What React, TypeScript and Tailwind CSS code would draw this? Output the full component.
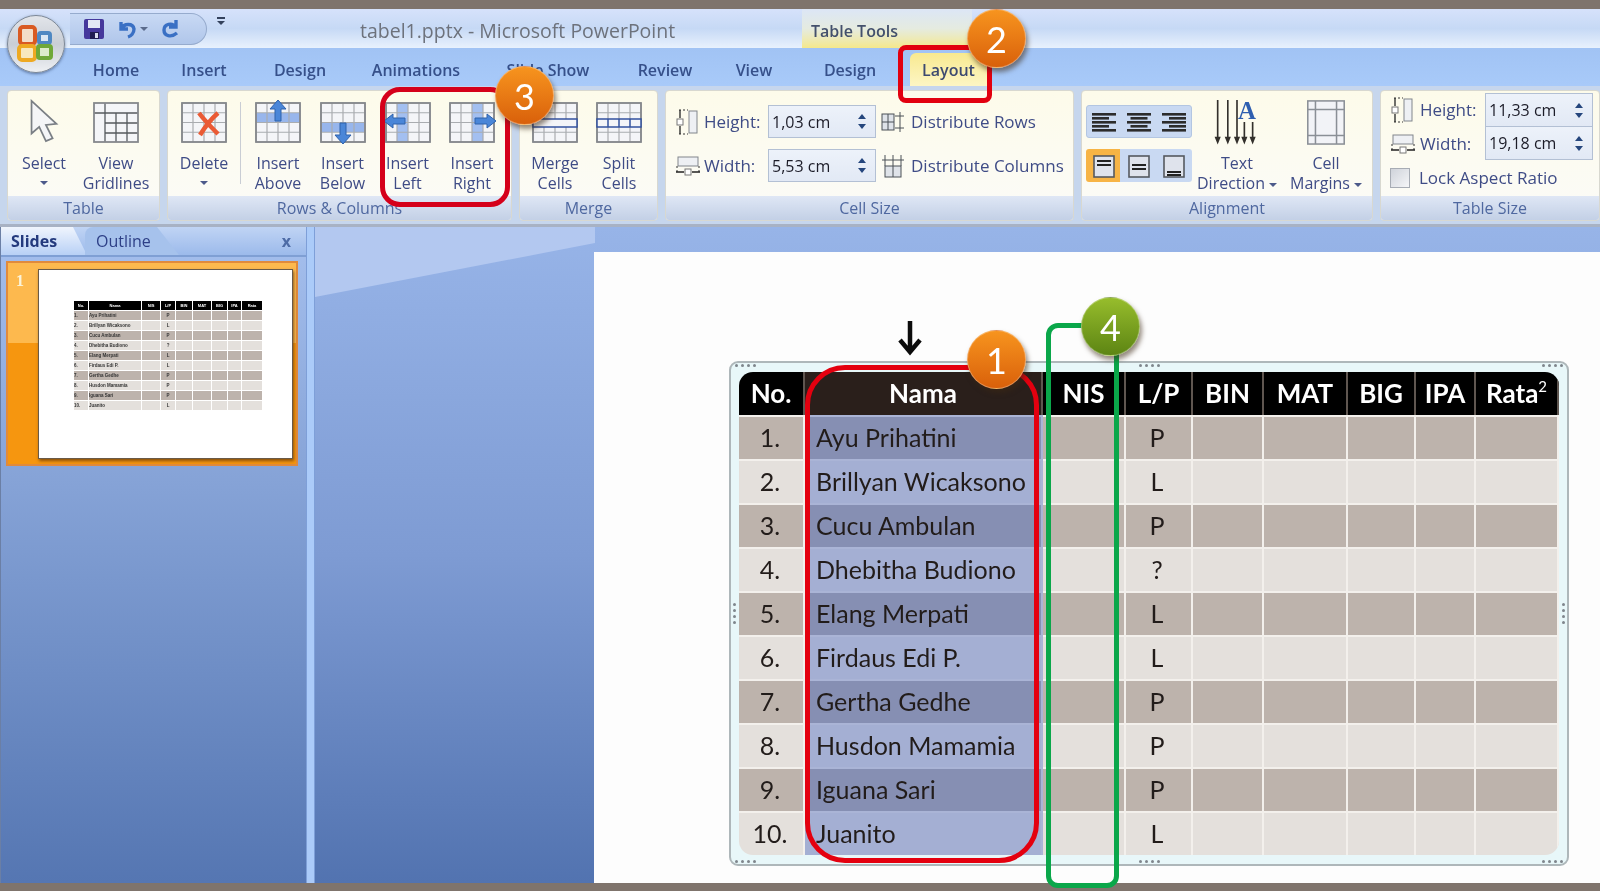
const uiFont = "font-['Open_Sans',sans-serif]";
const rows = [
  ["1.", "Ayu Prihatini", "P"],
  ["2.", "Brillyan Wicaksono", "L"],
  ["3.", "Cucu Ambulan", "P"],
  ["4.", "Dhebitha Budiono", "?"],
  ["5.", "Elang Merpati", "L"],
  ["6.", "Firdaus Edi P.", "L"],
  ["7.", "Gertha Gedhe", "P"],
  ["8.", "Husdon Mamamia", "P"],
  ["9.", "Iguana Sari", "P"],
  ["10.", "Juanito", "L"],
];
const headers = ["No.", "Nama", "NIS", "L/P", "BIN", "MAT", "BIG", "IPA", "Rata"];

function GridLines({ x, y, w, h, cols, rows: r }: { x: number; y: number; w: number; h: number; cols: number; rows: number }) {
  const lines = [];
  for (let i = 0; i <= cols; i++) lines.push(<line key={"c" + i} x1={x + (w * i) / cols} x2={x + (w * i) / cols} y1={y} y2={y + h} />);
  for (let i = 0; i <= r; i++) lines.push(<line key={"r" + i} y1={y + (h * i) / r} y2={y + (h * i) / r} x1={x} x2={x + w} />);
  return <g stroke="#a9acb0" strokeWidth="1.2">{lines}</g>;
}

function TableIcon({ kind }: { kind: string }) {
  return (
    <svg width="50" height="46" viewBox="0 0 50 46" fill="none">
      <rect x="3" y="4" width="44" height="39" fill="#f4f5f8" />
      {kind === "above" && <rect x="3" y="14" width="44" height="9" fill="#98b6ec" />}
      {kind === "below" && <rect x="3" y="24" width="44" height="9" fill="#98b6ec" />}
      {kind === "left" && <rect x="14" y="4" width="11" height="39" fill="#a3bff0" />}
      {kind === "right" && <rect x="25" y="4" width="11" height="39" fill="#a3bff0" />}
      {kind === "view" && <rect x="3" y="4" width="11" height="39" fill="#f4f5f8" />}
      {kind === "view" ? (
        <g stroke="#55595e" strokeWidth="1.3">
          <path d="M14 4 V43 M25 14 V43 M36 14 V43 M3 14 H47 M14 24 H47 M14 34 H47" />
        </g>
      ) : (
        <GridLines x={3} y={4} w={44} h={39} cols={4} rows={4} />
      )}
      <rect x="3" y="4" width="44" height="39" stroke="#85888c" strokeWidth="1.8" />
      {kind === "delete" && <path d="M20 14 C26 22 32 28 39 35 M39 14 C32 20 26 28 21 36" stroke="#ea5a35" strokeWidth="4.5" />}
      {kind === "above" && <path d="M25 1 L33 10 H28 V22 H22 V10 H17 Z" fill="#4a86d8" stroke="#2f62ac" />}
      {kind === "below" && <path d="M25 45 L33 36 H28 V24 H22 V36 H17 Z" fill="#4a86d8" stroke="#2f62ac" />}
      {kind === "left" && <path d="M1 22 L10 15 V19 H22 V25 H10 V29 Z" fill="#4a86d8" stroke="#2f62ac" />}
      {kind === "right" && <path d="M49 22 L40 15 V19 H28 V25 H40 V29 Z" fill="#4a86d8" stroke="#2f62ac" />}
      {kind === "merge" && <rect x="3" y="20" width="44" height="8" fill="#f4f5f8" stroke="#33529f" strokeWidth="1.5" />}
      {kind === "split" && (
        <g stroke="#33529f" strokeWidth="1.5">
          <rect x="3" y="20" width="44" height="8" fill="#f4f5f8" />
          <path d="M14 20 V28 M25 20 V28 M36 20 V28" />
        </g>
      )}
    </svg>
  );
}

function BigButton({ w, icon, lines, below, inline }: { w: string; icon: React.ReactNode; lines: string[]; below?: boolean; inline?: boolean }) {
  return (
    <div className={`${w} flex flex-col items-center`}>
      <div className="flex h-[46px] items-center justify-center">{icon}</div>
      <div className="mt-[8px] text-center text-[16px] leading-[20px] whitespace-nowrap text-[#3f4c86]">
        {lines.map((l, i) => (
          <div key={l}>
            {l}
            {inline && i === lines.length - 1 && <Caret />}
          </div>
        ))}
        {below && (
          <div className="flex h-[20px] items-center justify-center">
            <span className="h-0 w-0 border-x-[4px] border-t-[4px] border-x-transparent border-t-[#4c5a8a]" />
          </div>
        )}
      </div>
    </div>
  );
}

function Group({ w, label, children }: { w: string; label: string; children: React.ReactNode }) {
  return (
    <div className={`${w} flex h-[131px] shrink-0 flex-col overflow-hidden rounded-[4px] border border-[#d8d8d0] bg-linear-to-b from-[#fdfbea] to-[#fbfbf8]`}>
      <div className="h-[105px]">{children}</div>
      <div className="flex h-[24px] items-center justify-center bg-linear-to-b from-[#dfe7f5] to-[#c3d0e6] text-[16px] text-[#4f68a0]">{label}</div>
    </div>
  );
}

function SizeIcon({ width }: { width?: boolean }) {
  return width ? (
    <svg width="26" height="24" viewBox="0 0 26 24" fill="none">
      <rect x="3" y="3" width="20" height="9" fill="#eef0f4" stroke="#81868c" />
      <path d="M2 12 V20 M24 12 V20" stroke="#333" strokeDasharray="2 2" />
      <rect x="10" y="15" width="6" height="6" fill="#fff" stroke="#777" />
      <path d="M1 18 H9 M17 18 H25" stroke="#222" strokeWidth="1.3" />
    </svg>
  ) : (
    <svg width="24" height="26" viewBox="0 0 24 26" fill="none">
      <rect x="14" y="2" width="8" height="22" fill="#eef0f4" stroke="#81868c" />
      <path d="M4 1 H13 M4 25 H13" stroke="#333" strokeDasharray="2 2" />
      <rect x="2" y="10" width="6" height="6" fill="#fff" stroke="#777" />
      <path d="M5 1 V9 M5 17 V25" stroke="#222" strokeWidth="1.3" />
    </svg>
  );
}

function Spin({ value, cls }: { value: string; cls: string }) {
  return (
    <div className={`${cls} flex items-center justify-between border border-[#b3c0d4] bg-linear-to-b from-[#edf2fa] to-[#e2e9f5] pr-[9px] pl-[3px] text-[16px] text-[#1c1c28]`}>
      <span>{value}</span>
      <span className="flex flex-col gap-[5px]">
        <span className="h-0 w-0 border-x-[4px] border-b-[5px] border-x-transparent border-b-[#25467d]" />
        <span className="h-0 w-0 border-x-[4px] border-t-[5px] border-x-transparent border-t-[#25467d]" />
      </span>
    </div>
  );
}

function AlignIcon({ mode, vertical }: { mode: number; vertical?: boolean }) {
  if (vertical) {
    const ys = mode === 0 ? [9, 13] : mode === 1 ? [13, 17] : [20, 23];
    return (
      <svg width="26" height="28" viewBox="0 0 26 28" fill="none">
        <rect x="3" y="4" width="20" height="21" fill="#dfe3ec" stroke="#55595f" strokeWidth="1.6" />
        {ys.map((y) => (
          <line key={y} x1="6" x2="20" y1={y} y2={y} stroke="#222" strokeWidth="2" />
        ))}
      </svg>
    );
  }
  return (
    <svg width="28" height="24" viewBox="0 0 28 24" fill="none">
      {[4, 8, 12, 16, 20].map((y, i) => {
        const w = i % 2 ? 17 : 24;
        const x = mode === 0 ? 2 : mode === 1 ? 14 - w / 2 : 26 - w;
        return <rect key={y} x={x} y={y - 1} width={w} height="2.6" fill="#2c2c2c" />;
      })}
    </svg>
  );
}

function Caret() {
  return <span className="ml-[4px] inline-block h-0 w-0 border-x-[4px] border-t-[4px] border-x-transparent border-t-[#4c5a8a] align-middle" />;
}

function Badge({ n, cls, green }: { n: string; cls: string; green?: boolean }) {
  return (
    <div
      className={`${cls} absolute flex h-[59px] w-[59px] items-center justify-center rounded-full border border-white/30 font-['Lato',sans-serif] text-[36px] text-white shadow-[2px_4px_5px_rgba(60,40,20,0.55)] ${
        green ? "bg-linear-to-b from-[#97bd2c] to-[#5d8513]" : "bg-linear-to-b from-[#f7941e] to-[#d9600a]"
      }`}
    >
      {n}
    </div>
  );
}

function Dots({ cls, vertical }: { cls: string; vertical?: boolean }) {
  return (
    <div className={`${cls} absolute flex gap-[3px] ${vertical ? "flex-col" : ""}`}>
      {[0, 1, 2, 3].map((i) => (
        <span key={i} className="h-[3px] w-[3px] rounded-full bg-[#7f868c]" />
      ))}
    </div>
  );
}

function SlideTable() {
  return (
    <div className="grid grid-cols-[66px_238px_83px_67px_71px_84px_68px_60px_83px] overflow-hidden rounded-[14px] font-['Lato',sans-serif] text-[25px] text-[#221c1a]">
      {headers.map((h, i) => (
        <div
          key={h}
          className={`flex h-[43px] items-center justify-center border-r-2 border-[#5f5650] text-[26px] font-bold text-white ${i === 1 ? "bg-[#2a1f1b]" : "bg-black"}`}
        >
          {h}
          {h === "Rata" && <sup className="text-[15px] font-normal">2</sup>}
        </div>
      ))}
      {rows.map((r, ri) => {
        const odd = ri % 2 === 0;
        const base = `h-[44px] flex items-center border-r-2 border-t-2 border-[#f3f0ec] ${odd ? "bg-[#bdb3ac]" : "bg-[#e4e0dc]"}`;
        return headers.map((h, ci) => {
          if (ci === 0) return <div key={ci} className={`${base} justify-center pr-[2px]`}>{r[0]}</div>;
          if (ci === 1)
            return (
              <div key={ci} className={`flex h-[44px] items-center border-r-2 border-t-2 border-[#aab4d6] pl-[11px] whitespace-nowrap ${odd ? "bg-[#868fb3]" : "bg-[#a4afd3]"}`}>
                {r[1]}
              </div>
            );
          if (ci === 3) return <div key={ci} className={`${base} justify-center pr-[3px]`}>{r[2]}</div>;
          return <div key={ci} className={base} />;
        });
      })}
    </div>
  );
}

function Thumb() {
  return (
    <div className="grid grid-cols-[14px_52px_18px_14px_16px_18px_15px_13px_20px] gap-px self-start font-['Liberation_Sans',sans-serif] text-[4.5px] leading-[9px] font-bold text-[#333]">
      {headers.map((h) => (
        <div key={h} className="h-[9px] overflow-hidden bg-black text-center text-[4px] text-white">{h}</div>
      ))}
      {rows.map((r, ri) =>
        headers.map((h, ci) => (
          <div key={ci} className={`h-[9px] overflow-hidden whitespace-nowrap ${ri % 2 === 0 ? "bg-[#bdb3ac]" : "bg-[#e4e0dc]"} ${ci === 3 ? "text-center" : ""}`}>
            {ci === 0 ? r[0] : ci === 1 ? r[1] : ci === 3 ? r[2] : ""}
          </div>
        )),
      )}
    </div>
  );
}

export default function App() {
  return (
    <div className={`relative flex h-[891px] w-[1600px] flex-col overflow-hidden bg-[#7f746c] blur-[0.4px] ${uiFont}`}>
      <div className="h-[9px] shrink-0 bg-[#7f746c]" />

      {/* title bar */}
      <div className="relative flex h-[39px] shrink-0 items-center bg-linear-to-b from-[#d6e2fb] via-[#c6d9f5] to-[#e8f1fd] pt-[5px] pl-[360px]">
        <span className="text-[19.5px] whitespace-nowrap text-[#6d727c]">tabel1.pptx - Microsoft PowerPoint</span>
        <div className="absolute top-[4px] left-[70px] flex h-[32px] w-[137px] items-center gap-[10px] rounded-r-full border border-l-0 border-[#96abcd] bg-linear-to-b from-[#c8d9f4] to-[#b0c6ea] pl-[12px]">
          <svg width="24" height="24" viewBox="0 0 24 24">
            <rect x="2" y="2" width="20" height="20" rx="2" fill="#45389c" />
            <rect x="6" y="3" width="12" height="8" fill="#e4e8f5" />
            <rect x="8" y="15" width="9" height="7" fill="#1f1c50" />
            <rect x="13" y="16" width="3" height="5" fill="#d8dcec" />
          </svg>
          <svg width="22" height="22" viewBox="0 0 22 22" fill="none">
            <path d="M5 4 V11 H12 M5 11 C8 5 17 5 18 11 C18 15 15 18 12 19" stroke="#3a70c4" strokeWidth="3.4" />
          </svg>
          <span className="-ml-[8px] h-0 w-0 border-x-[4px] border-t-[4px] border-x-transparent border-t-[#5a6b8c]" />
          <svg width="22" height="22" viewBox="0 0 22 22" fill="none" className="ml-[2px]">
            <path d="M16 2 V9 H9 M16 9 C12 4 4 6 4 12 C4 18 11 20 17 15" stroke="#3a70c4" strokeWidth="3.4" />
          </svg>
        </div>
        <div className="absolute top-[8px] left-[217px] flex flex-col items-center gap-[2px]">
          <span className="h-[2px] w-[8px] bg-[#33415c]" />
          <span className="h-0 w-0 border-x-[4px] border-t-[4px] border-x-transparent border-t-[#33415c]" />
        </div>
        <div className="absolute top-0 left-[802px] flex h-[39px] w-[170px] items-center bg-linear-to-b from-[#dce6f6] via-[#e5ebe0] to-[#f5e88a] pt-[5px] pl-[9px] text-[16px] font-semibold text-[#43506c]">
          Table Tools
        </div>
      </div>

      {/* tab row */}
      <div className="flex h-[38px] shrink-0 items-end bg-linear-to-b from-[#a1c3f4] to-[#a8caf9] pl-[76px] text-[16px] font-semibold text-[#36508a]">
        <div className="h-[28px] w-[80px] text-center">Home</div>
        <div className="h-[28px] w-[96px] text-center">Insert</div>
        <div className="h-[28px] w-[96px] text-center">Design</div>
        <div className="h-[28px] w-[136px] text-center">Animations</div>
        <div className="h-[28px] w-[128px] text-center">Slide Show</div>
        <div className="h-[28px] w-[106px] text-center">Review</div>
        <div className="h-[28px] w-[72px] text-center">View</div>
        <div className="h-[28px] w-[120px] text-center">Design</div>
        <div className="h-[33px] w-[81px] rounded-t-[6px] bg-linear-to-b from-[#f8e98f] to-[#fdf6c4] pt-[5px] pr-[4px] text-center text-[#3d4a70]">Layout</div>
      </div>

      {/* ribbon */}
      <div className="flex h-[141px] shrink-0 gap-[7px] border-b-[3px] border-[#a8b2c4] bg-[#c6d6ed] pt-[4px] pl-[7px]">
        <Group w="w-[153px]" label="Table">
          <div className="flex pt-[8px]">
            <BigButton
              w="w-[72px]"
              below
              lines={["Select"]}
              icon={
                <svg width="34" height="46" viewBox="0 0 34 48" fill="none">
                  <path d="M4 2 L4 36 L12 29 L19 44 L26 41 L19 27 L30 26 Z" fill="#f4f5f7" stroke="#7a7f85" strokeWidth="1.8" />
                </svg>
              }
            />
            <BigButton w="w-[72px]" lines={["View", "Gridlines"]} icon={<TableIcon kind="view" />} />
          </div>
        </Group>
        <Group w="w-[345px]" label="Rows & Columns">
          <div className="flex pt-[8px]">
            <BigButton w="w-[72px]" below lines={["Delete"]} icon={<TableIcon kind="delete" />} />
            <div className="mt-[3px] h-[82px] w-px bg-[#c9cdd4]" />
            <BigButton w="w-[64px] ml-[5px]" lines={["Insert", "Above"]} icon={<TableIcon kind="above" />} />
            <BigButton w="w-[65px]" lines={["Insert", "Below"]} icon={<TableIcon kind="below" />} />
            <BigButton w="w-[65px]" lines={["Insert", "Left"]} icon={<TableIcon kind="left" />} />
            <BigButton w="w-[64px]" lines={["Insert", "Right"]} icon={<TableIcon kind="right" />} />
          </div>
        </Group>
        <Group w="w-[139px]" label="Merge">
          <div className="flex pt-[8px] pl-[3px]">
            <BigButton w="w-[64px]" lines={["Merge", "Cells"]} icon={<TableIcon kind="merge" />} />
            <BigButton w="w-[64px]" lines={["Split", "Cells"]} icon={<TableIcon kind="split" />} />
          </div>
        </Group>
        <Group w="w-[409px]" label="Cell Size">
          <div className="grid grid-cols-[29px_64px_108px_auto] items-center gap-y-[11px] pt-[14px] pl-[9px] text-[17px] text-[#3f4c86]">
            <SizeIcon />
            <span>Height:</span>
            <Spin value="1,03 cm" cls="h-[33px]" />
            <span className="flex items-center gap-[6px] pl-[5px] whitespace-nowrap">
              <svg width="24" height="24" viewBox="0 0 24 24" fill="none" stroke="#4b5056">
                <rect x="1" y="4" width="12" height="16" fill="#dfe3e9" />
                <path d="M1 12 H13 M7 4 V20 M14 6 H23 M14 18 H23 M19 2 V22" />
              </svg>
              Distribute Rows
            </span>
            <SizeIcon width />
            <span>Width:</span>
            <Spin value="5,53 cm" cls="h-[33px]" />
            <span className="flex items-center gap-[6px] pl-[5px] whitespace-nowrap">
              <svg width="24" height="24" viewBox="0 0 24 24" fill="none" stroke="#4b5056">
                <rect x="4" y="12" width="16" height="11" fill="#dfe3e9" />
                <path d="M12 12 V23 M4 12 V1 M20 12 V1 M12 1 V12 M1 6 H23" />
              </svg>
              Distribute Columns
            </span>
          </div>
        </Group>
        <Group w="w-[292px]" label="Alignment">
          <div className="flex pl-[4px]">
            <div className="flex w-[106px] flex-col gap-[11px] pt-[14px]">
              <div className="flex h-[33px] items-center justify-around rounded-[3px] border border-[#b3c6e2] bg-[#c9d9f2]">
                <AlignIcon mode={0} />
                <AlignIcon mode={1} />
                <AlignIcon mode={2} />
              </div>
              <div className="flex h-[33px] items-center justify-around rounded-[3px] bg-linear-to-r from-[#f7b445] from-32% to-[#c9d9f2] to-32%">
                <AlignIcon mode={0} vertical />
                <AlignIcon mode={1} vertical />
                <AlignIcon mode={2} vertical />
              </div>
            </div>
            <div className="flex pt-[8px]">
              <BigButton
                w="w-[90px]"
                inline
                lines={["Text", "Direction"]}
                icon={
                  <svg width="46" height="46" viewBox="0 0 50 50" fill="none" stroke="#33302c" strokeWidth="1.8">
                    <path d="M4 1 V44 M15 1 V44 M25 1 V44 M33 25 V44 M42 25 V44" />
                    <path d="M2 42 L4 47 L6 42 Z M13 42 L15 47 L17 42 Z M23 42 L25 47 L27 42 Z M31 42 L33 47 L35 42 Z M40 42 L42 47 L44 42 Z" fill="#33302c" />
                    <text x="26" y="22" fontSize="27" fontWeight="700" fontFamily="Liberation Serif, serif" fill="#2f5fb0" stroke="none">A</text>
                  </svg>
                }
              />
              <BigButton
                w="w-[88px]"
                inline
                lines={["Cell", "Margins"]}
                icon={
                  <svg width="40" height="46" viewBox="0 0 40 48" fill="none" stroke="#8a8f96" strokeWidth="1.6">
                    <rect x="1" y="2" width="38" height="45" fill="#f2f3f7" />
                    <path d="M9 2 V47 M31 2 V47 M1 11 H39 M1 38 H39" />
                  </svg>
                }
              />
            </div>
          </div>
        </Group>
        <Group w="w-[220px]" label="Table Size">
          <div className="grid grid-cols-[30px_65px_108px] items-center pt-[2px] pl-[9px] text-[17px] text-[#3f4c86]">
            <SizeIcon />
            <span>Height:</span>
            <Spin value="11,33 cm" cls="h-[34px]" />
            <SizeIcon width />
            <span>Width:</span>
            <Spin value="19,18 cm" cls="h-[33px] border-t-0" />
          </div>
          <div className="mt-[5px] flex items-center gap-[9px] pl-[9px] text-[17px] text-[#3f4c86]">
            <span className="h-[20px] w-[20px] border border-[#a7acb4] bg-linear-to-br from-[#cfd3da] to-[#f5f6f8]" />
            Lock Aspect Ratio
          </div>
        </Group>
      </div>

      {/* workspace */}
      <div className="flex min-h-0 flex-1">
        <div className="flex w-[306px] shrink-0 flex-col border-l border-[#6b7fa5] bg-linear-to-b from-[#a6c0ee] to-[#5576b2]">
          <div className="flex h-[30px] shrink-0 items-center border-b-2 border-[#7f9fd4] bg-linear-to-b from-[#c0d4f4] to-[#9cbaeb] text-[16px]">
            <span className="flex h-full w-[86px] items-center bg-linear-to-b from-[#f0f5fd] to-[#b8d0f5] pl-[10px] font-bold text-[#243a7d] [clip-path:polygon(0_0,72px_0,100%_100%,0_100%)]">Slides</span>
            <span className="-ml-[2px] flex h-full w-[94px] items-center rounded-tl-[8px] bg-[#a6c2ec] pl-[11px] text-[#2d3f86] [clip-path:polygon(0_0,72px_0,100%_100%,0_100%)]">Outline</span>
            <span className="ml-auto pr-[15px] font-bold text-[#4e6ca6]">x</span>
          </div>
          <div className="mt-[4px] ml-[5px] flex h-[205px] w-[292px] gap-[5px] border-2 border-[#e08a3c] bg-linear-to-b from-[#fdb94e] from-40% to-[#f6960f] to-40% pt-[6px] pl-[8px]">
            <span className="w-[17px] font-['Liberation_Serif',serif] text-[16px] font-bold text-[#fbf3d8]">1</span>
            <div className="flex h-[190px] w-[255px] justify-start border border-[#6a5a48] bg-white pt-[31px] pl-[35px] shadow-[1px_2px_3px_rgba(90,50,10,0.7)]">
              <Thumb />
            </div>
          </div>
        </div>
        <div className="w-[9px] shrink-0 border-x border-[#7e9fd8] bg-[#abcbf9]" />
        <div className="relative flex min-w-0 flex-1 bg-linear-to-b from-[#97b4e8] via-[#7e9bd3] to-[#5273b0] pt-[25px] pl-[279px]">
          <div className="absolute top-0 left-0 h-[70px] w-[280px] bg-[#b3c8f0] [clip-path:polygon(0_100%,0_0,100%_0,100%_23%)]" />
          <div className="relative flex-1 bg-[#fdfdfd] pt-[109px] pl-[135px]">
            <div className="relative w-[840px] rounded-[9px] border-2 border-[#aeb7ba] bg-[#e8f7f9] px-[8px] py-[9px]">
              <SlideTable />
              <Dots cls="top-[1px] left-[4px]" />
              <Dots cls="top-[1px] right-[4px]" />
              <Dots cls="bottom-[1px] left-[4px]" />
              <Dots cls="bottom-[1px] right-[4px]" />
              <Dots cls="top-[1px] left-[408px]" />
              <Dots cls="bottom-[1px] left-[408px]" />
              <Dots cls="top-[240px] left-[2px]" vertical />
              <Dots cls="top-[240px] right-[2px]" vertical />
            </div>
          </div>
        </div>
      </div>
      <div className="h-[8px] shrink-0 bg-[#7f746c]" />

      {/* office button */}
      <div className="absolute top-[15px] left-[7px] flex h-[58px] w-[58px] items-center justify-center rounded-full border border-[#7d8896] bg-linear-to-b from-[#e2e5ea] via-[#c9ced6] to-[#eef0f3] shadow-[0_1px_3px_rgba(40,60,100,0.6)]">
        <svg width="38" height="38" viewBox="0 0 38 38" fill="none" strokeWidth="4">
          <rect x="3" y="2" width="15" height="17" rx="3" fill="#f3ddc8" stroke="#d95a22" />
          <rect x="22" y="8" width="11" height="10" rx="2" fill="#dbe7f3" stroke="#4f88c2" />
          <rect x="2" y="21" width="16" height="14" rx="3" fill="#f8e8bc" stroke="#eea922" />
          <rect x="21" y="21" width="13" height="12" rx="2" fill="#dcebc9" stroke="#6fa838" />
        </svg>
      </div>

      {/* annotations */}
      <div className="absolute top-[45px] left-[898px] h-[58px] w-[94px] rounded-[8px] border-[5px] border-[#e2000f]" />
      <div className="absolute top-[87px] left-[380px] h-[120px] w-[130px] rounded-[20px] border-[5px] border-[#d5001a]" />
      <div className="absolute top-[365px] left-[805px] h-[498px] w-[234px] rounded-[40px] border-[5px] border-[#e4000f]" />
      <div className="absolute top-[323px] left-[1046px] h-[565px] w-[73px] rounded-[12px] border-[5px] border-[#0aa74a]" />
      <svg className="absolute top-[320px] left-[897px]" width="26" height="36" viewBox="0 0 26 36" fill="none" stroke="#0c0c0c" strokeWidth="4.5">
        <path d="M13 1 V32 M3 20 L13 32 L23 20" />
      </svg>
      <Badge n="1" cls="top-[330px] left-[967px]" />
      <Badge n="2" cls="top-[9px] left-[967px]" />
      <Badge n="3" cls="top-[66px] left-[495px]" />
      <Badge n="4" cls="top-[297px] left-[1081px]" green />
    </div>
  );
}
